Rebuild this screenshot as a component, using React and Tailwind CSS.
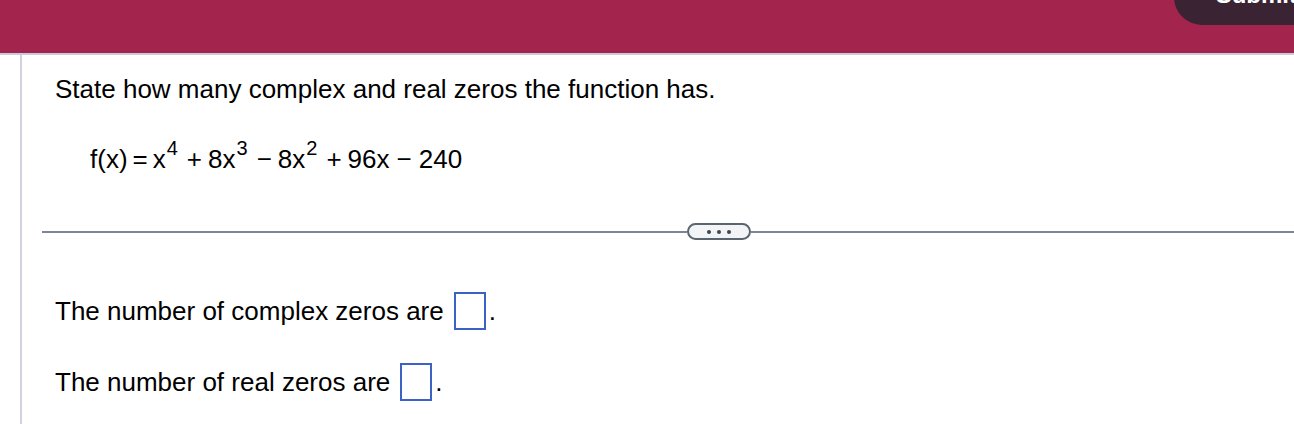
export default function App() {
  return (
    <div className="relative h-[424px] w-full overflow-hidden bg-white font-['Liberation_Sans',Arial,sans-serif] text-black">
      <header className="relative h-[55px] border-b-2 border-[#c9ccd8] bg-[#a3244c]">
        <button className="absolute right-[-60px] top-[-35px] flex h-[60px] items-center rounded-[28px] bg-[#3a2433] pl-[42px] pr-[57px] text-[24px] font-bold text-white">
          Submit
        </button>
      </header>

      <main className="ml-[20px] h-full border-l-2 border-[#d0d3de]">
        <p className="pl-[33px] pt-[19px] text-[26px] leading-[30px]">
          State how many complex and real zeros the function has.
        </p>

        <div className="mt-[40px] flex h-[30px] items-baseline pl-[68px] text-[26px] leading-[30px]">
          <span>f(x)</span>
          <span className="mx-[5px]">=</span>
          <span>x</span>
          <span className="relative -top-[13px] ml-[1px] text-[20px] leading-none">4</span>
          <span className="ml-[9px] mr-[6px]">+</span>
          <span>8x</span>
          <span className="relative -top-[13px] ml-[1px] text-[20px] leading-none">3</span>
          <span className="ml-[9px] mr-[6px]">−</span>
          <span>8x</span>
          <span className="relative -top-[13px] ml-[1px] text-[20px] leading-none">2</span>
          <span className="ml-[9px] mr-[6px]">+</span>
          <span>96x</span>
          <span className="mx-[7px]">−</span>
          <span>240</span>
        </div>

        <div className="ml-[20px] mt-[49px] flex h-[17px] items-center">
          <div className="h-[2px] w-[645px] bg-[#7d8793]" />
          <div className="flex h-[17px] w-[64px] items-center justify-center gap-[6px] rounded-full border-2 border-[#5b6570] bg-[#f3f4f6]">
            <span className="h-[4px] w-[4px] rounded-full bg-[#3f4650]" />
            <span className="h-[4px] w-[4px] rounded-full bg-[#3f4650]" />
            <span className="h-[4px] w-[4px] rounded-full bg-[#3f4650]" />
          </div>
          <div className="h-[2px] flex-1 bg-[#7d8793]" />
        </div>

        <div className="mt-[52px] flex items-center pl-[33px] text-[26px] leading-[30px]">
          <span>The number of complex zeros are</span>
          <span className="ml-[10px] h-[38px] w-[32px] border-2 border-[#3b62c4]" />
          <span className="ml-[3px]">.</span>
        </div>

        <div className="mt-[33px] flex items-center pl-[33px] text-[26px] leading-[30px]">
          <span>The number of real zeros are</span>
          <span className="ml-[10px] h-[38px] w-[32px] border-2 border-[#3b62c4]" />
          <span className="ml-[3px]">.</span>
        </div>
      </main>
    </div>
  );
}
